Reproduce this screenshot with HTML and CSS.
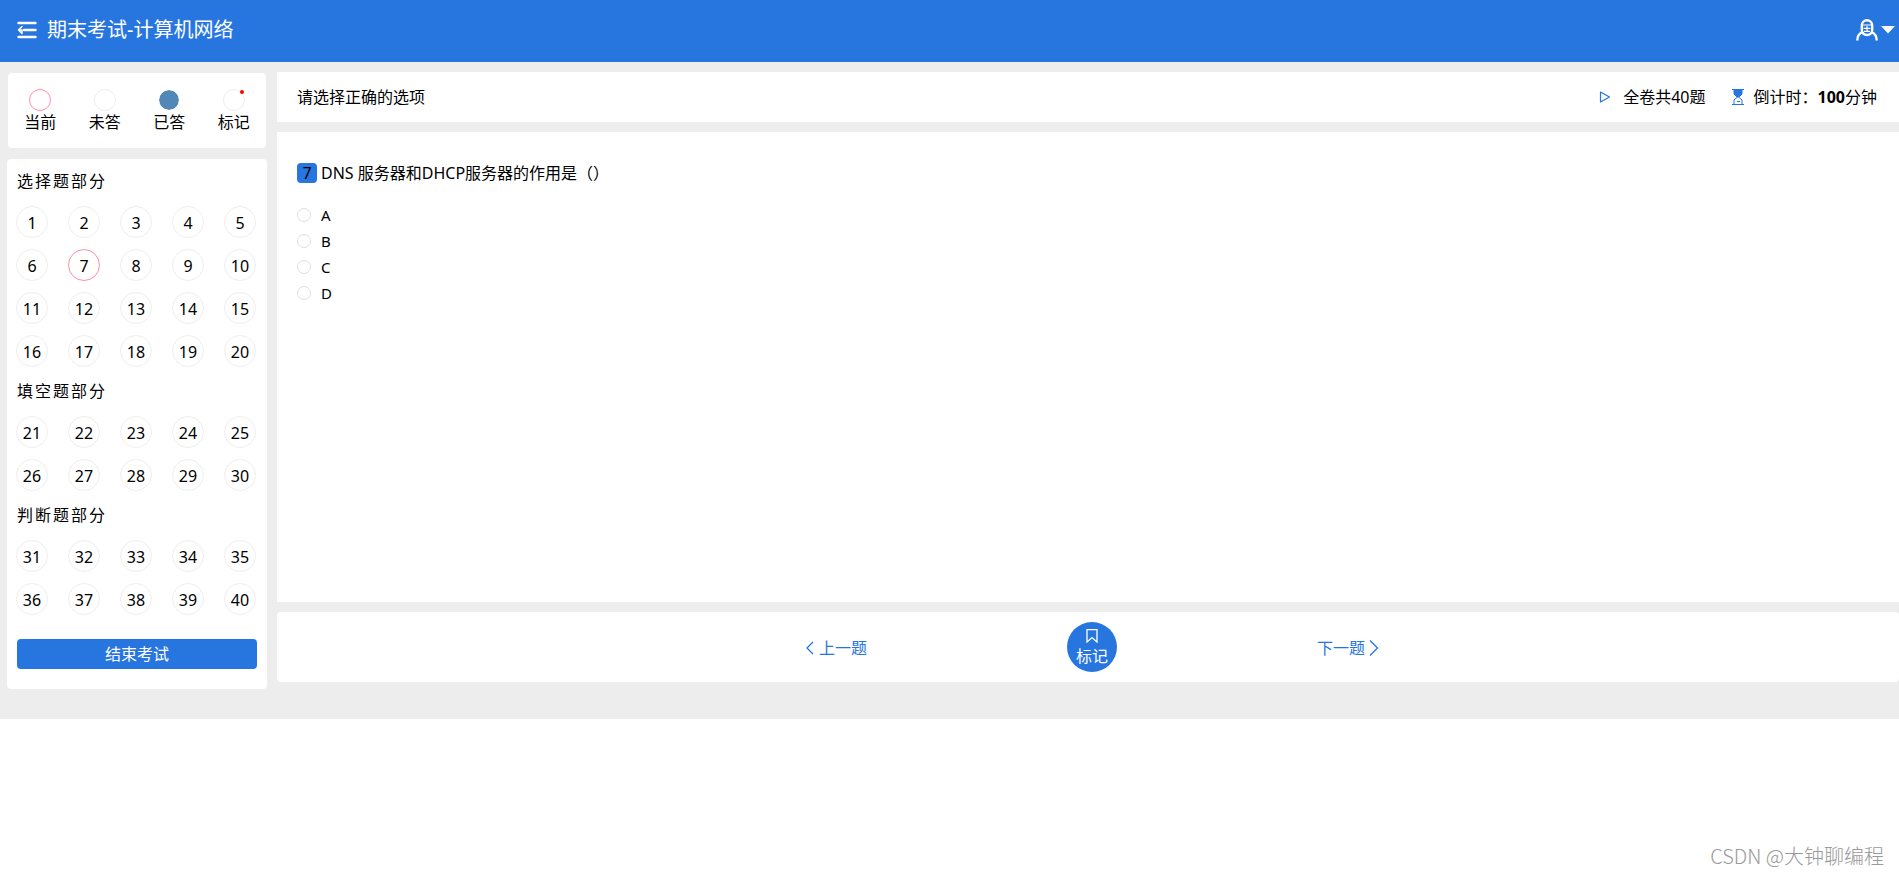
FILE: index.html
```
<!DOCTYPE html>
<html lang="zh-CN">
  <head>
    <meta charset="UTF-8" />
    <meta name="viewport" content="width=device-width, initial-scale=1.0" />
    <title>期末考试-计算机网络</title>
    <link rel="stylesheet" href="styles.css" />
  </head>
  <body>
    <header class="header">
      <button class="icon-btn" type="button" aria-label="收起答题卡" id="toggle">
        <svg width="20" height="18" viewBox="0 0 20 18" fill="none" stroke="#fff" stroke-width="2.400" stroke-linecap="round">
          <path d="M1.500 2h17M7 9h11.500M1.500 16h17" />
          <path d="M5 5.500L1.500 9 5 12.500V9H2.500" stroke-width="1.500" stroke-linejoin="round" />
        </svg>
      </button>
      <h1 class="title">期末考试-计算机网络</h1>
      <button class="icon-btn user" type="button" aria-label="用户">
        <svg width="22" height="22" viewBox="0 0 22 22" fill="none" stroke="#fff" stroke-width="2.400">
          <path d="M5.800 11V6.500a5.200 5.200 0 0 1 10.400 0V11a5.200 5 0 0 1-10.400 0z" />
          <path d="M1.300 21.500c0-4.500 1.700-7 5.200-8.500M20.700 21.500c0-4.500-1.700-7-5.200-8.500" />
          <path d="M7 6h8M7.500 9.300h7M11 7v5M8 12.300h6" stroke-width="1.200" />
        </svg>
        <svg width="14" height="8" viewBox="0 0 14 8"><path d="M0 0h14L7 7.500z" fill="#fff" /></svg>
      </button>
    </header>

    <div class="container">
      <aside class="sidebar" id="sidebar">
        <ul class="legend">
          <li><i class="dot current"></i>当前</li>
          <li><i class="dot"></i>未答</li>
          <li><i class="dot done"></i>已答</li>
          <li><i class="dot marked"></i>标记</li>
        </ul>
        <div class="card">
          <section class="part">
            <h2>选择题部分</h2>
            <div class="nums">
              <button type="button">1</button>
              <button type="button">2</button>
              <button type="button">3</button>
              <button type="button">4</button>
              <button type="button">5</button>
              <button type="button">6</button>
              <button type="button" class="current">7</button>
              <button type="button">8</button>
              <button type="button">9</button>
              <button type="button">10</button>
              <button type="button">11</button>
              <button type="button">12</button>
              <button type="button">13</button>
              <button type="button">14</button>
              <button type="button">15</button>
              <button type="button">16</button>
              <button type="button">17</button>
              <button type="button">18</button>
              <button type="button">19</button>
              <button type="button">20</button>
            </div>
          </section>
          <section class="part">
            <h2>填空题部分</h2>
            <div class="nums">
              <button type="button">21</button>
              <button type="button">22</button>
              <button type="button">23</button>
              <button type="button">24</button>
              <button type="button">25</button>
              <button type="button">26</button>
              <button type="button">27</button>
              <button type="button">28</button>
              <button type="button">29</button>
              <button type="button">30</button>
            </div>
          </section>
          <section class="part">
            <h2>判断题部分</h2>
            <div class="nums">
              <button type="button">31</button>
              <button type="button">32</button>
              <button type="button">33</button>
              <button type="button">34</button>
              <button type="button">35</button>
              <button type="button">36</button>
              <button type="button">37</button>
              <button type="button">38</button>
              <button type="button">39</button>
              <button type="button">40</button>
            </div>
          </section>
          <button class="finish" type="button">结束考试</button>
        </div>
      </aside>

      <main class="main">
        <div class="topbar">
          <p class="tip">请选择正确的选项</p>
          <p class="count">
            <svg width="12" height="12" viewBox="0 0 12 12" fill="none" stroke="#2776df" stroke-width="1.200" stroke-linejoin="round"><path d="M1.500 1L10.500 6l-9 5z" /></svg>
            全卷共40题
          </p>
          <p class="time">
            <svg width="12" height="16" viewBox="0 0 12 16" fill="none" stroke="#2776df">
              <path d="M0 .500h12M0 15.500h12" />
              <path d="M2 1h8v4L7 8H5L2 5z" fill="#2776df" />
              <path d="M5.500 8L2 11v4M6.500 8L10 11v4M5 12.500h3" />
            </svg>
            <span>倒计时：<b>100</b>分钟</span>
          </p>
        </div>

        <div class="question">
          <p class="stem"><span class="no">7</span>DNS 服务器和DHCP服务器的作用是（）</p>
          <div class="options">
            <label><input type="radio" name="answer" value="A" />A</label>
            <label><input type="radio" name="answer" value="B" />B</label>
            <label><input type="radio" name="answer" value="C" />C</label>
            <label><input type="radio" name="answer" value="D" />D</label>
          </div>
        </div>

        <div class="pager">
          <button class="step" type="button">
            <svg width="10" height="14" viewBox="0 0 10 14" fill="none" stroke="#2776df" stroke-width="1.300"><path d="M8 1L2 7l6 6" /></svg>
            上一题
          </button>
          <button class="mark" type="button">
            <svg width="12" height="14" viewBox="0 0 12 14" fill="none" stroke="#fff" stroke-width="1.300"><path d="M1 .700h10v12.300L6 8.500 1 13z" /></svg>
            标记
          </button>
          <button class="step" type="button">
            下一题
            <svg width="10" height="16" viewBox="0 0 10 16" fill="none" stroke="#2776df" stroke-width="1.300"><path d="M1 .500L8.500 8 1 15.500" /></svg>
          </button>
        </div>
      </main>
    </div>
    <div class="watermark">CSDN @大钟聊编程</div>

    <script>
      // show / hide the answer card
      const sidebar = document.querySelector("#sidebar");
      document.querySelector("#toggle").addEventListener("click", function () {
        sidebar.classList.toggle("hidden");
      });
    </script>
  </body>
</html>
```

FILE: styles.css
```
* {
  margin: 0;
  padding: 0;
  box-sizing: border-box;
}
body {
  font-family: "Noto Sans", "Noto Sans CJK SC", sans-serif;
  font-size: 16px;
  line-height: 22px;
  color: #000;
  background: #fff;
}
ul {
  list-style: none;
}
button {
  font: inherit;
  color: inherit;
  border: none;
  background: none;
  cursor: pointer;
}
svg {
  flex: none;
}

.header {
  display: flex;
  align-items: center;
  height: 62px;
  padding: 0 4px 2px 17px;
  background: #2776df;
  color: #fff;
}
.icon-btn {
  display: flex;
  align-items: center;
}
.header .title {
  margin-left: 10px;
  font-size: 20px;
  font-weight: normal;
}
.header .user {
  gap: 3px;
  margin-left: auto;
}

.container {
  display: flex;
  align-items: flex-start;
  gap: 10px;
  padding: 10px 0 30px 7px;
  background: #ededed;
}

.sidebar {
  flex: none;
  width: 260px;
  padding-top: 1px;
}
.sidebar.hidden {
  display: none;
}
.legend {
  display: flex;
  margin: 0 1px 11px;
  padding: 16px 0 15px;
  border-radius: 4px;
  background: #fff;
}
.legend li {
  flex: 1;
  display: flex;
  flex-direction: column;
  align-items: center;
}
.dot {
  position: relative;
  width: 22px;
  height: 22px;
  border: 1px solid #eee;
  border-radius: 50%;
}
.dot.current {
  border-color: #ff90aa;
}
.dot.done {
  border-color: #fff;
  background: #5188b8;
  background-clip: padding-box;
}
.dot.marked::after {
  content: "";
  position: absolute;
  top: 0;
  right: 0;
  width: 4px;
  height: 4px;
  border-radius: 50%;
  background: red;
}

.card {
  padding: 12px 10px 20px;
  border-radius: 4px;
  background: #fff;
}
.part + .part {
  margin-top: 14px;
}
.part h2 {
  margin-bottom: 15px;
  font-size: 16px;
  font-weight: normal;
  line-height: 20px;
  letter-spacing: 2px;
}
.nums {
  display: grid;
  grid-template-columns: repeat(5, 32px);
  justify-content: space-between;
  row-gap: 11px;
  margin: 0 1px 0 -1px;
}
.nums button {
  height: 32px;
  padding-top: 2px;
  border: 1px solid #eee;
  border-radius: 50%;
}
.nums .current {
  border-color: #ff90aa;
}
.finish {
  width: 100%;
  height: 30px;
  margin-top: 24px;
  border-radius: 4px;
  background: #2776df;
  color: #fff;
}

.main {
  flex: 1;
  display: flex;
  flex-direction: column;
  gap: 10px;
}
.topbar {
  display: flex;
  align-items: center;
  height: 50px;
  padding: 0 22px 0 20px;
  background: #fff;
}
.topbar .tip {
  margin-right: auto;
}
.topbar .count,
.topbar .time {
  display: flex;
  align-items: center;
}
.topbar .count {
  gap: 12px;
  margin-right: 26px;
}
.topbar .time {
  gap: 10px;
}

.question {
  min-height: 470px;
  padding: 30px 20px;
  background: #fff;
}
.stem {
  display: flex;
  align-items: center;
  gap: 4px;
}
.stem .no {
  width: 20px;
  border-radius: 4px;
  background: #2776df;
  line-height: 20px;
  text-align: center;
}
.options {
  display: flex;
  flex-direction: column;
  margin-top: 18px;
}
.options label {
  display: flex;
  align-items: center;
  gap: 10px;
  font-size: 15px;
  line-height: 26px;
}
.options input {
  appearance: none;
  width: 14px;
  height: 14px;
  border: 1px solid #dcdfe6;
  border-radius: 50%;
}
.options input:checked {
  border: 4px solid #2776df;
}

.pager {
  display: flex;
  justify-content: center;
  align-items: center;
  gap: 200px;
  height: 70px;
  padding-left: 8px;
  border-radius: 4px;
  background: #fff;
}
.step {
  display: flex;
  align-items: center;
  gap: 4px;
  padding-top: 2px;
  color: #2776df;
}
.mark {
  display: flex;
  flex-direction: column;
  align-items: center;
  gap: 2px;
  width: 50px;
  height: 50px;
  padding-top: 7px;
  border-radius: 50%;
  background: #2776df;
  color: #fff;
}

.watermark {
  position: absolute;
  right: 15px;
  bottom: 7px;
  font-family: "Noto Sans CJK SC", sans-serif;
  font-size: 20px;
  font-weight: 300;
  color: #999;
}
```
